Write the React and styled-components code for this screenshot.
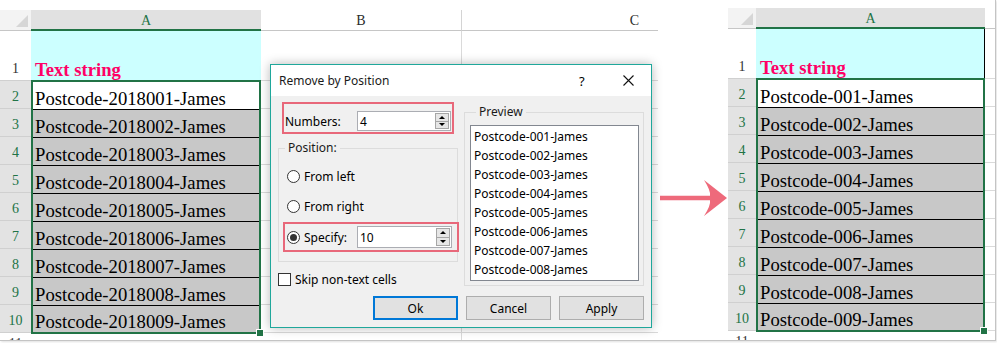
import React from 'react';
import styled, { createGlobalStyle } from 'styled-components';

const GREEN = '#217346';
const HILITE = '#e8687a';
const UI_FONT = "'Noto Sans', 'Open Sans', sans-serif";
const CELL_FONT = "'Liberation Serif', 'Times New Roman', serif";

const GlobalStyle = createGlobalStyle`
  html, body {
    margin: 0;
    padding: 0;
    background: #fff;
  }
  body {
    width: 997px;
    height: 343px;
    overflow: hidden;
  }
`;

const leftValues = Array.from({ length: 9 }, (_, i) => `Postcode-201800${i + 1}-James`);
const rightValues = Array.from({ length: 9 }, (_, i) => `Postcode-00${i + 1}-James`);
const previewItems = Array.from({ length: 8 }, (_, i) => `Postcode-00${i + 1}-James`);

function Sheet({ width, top, rowHeadWidth, colAWidth, extraCols, values, edge }) {
  return (
    <SheetWrap $width={width} $top={top}>
      <Column $w={rowHeadWidth}>
        <Corner>
          <CornerMark />
        </Corner>
        <RowNum $h={50}>1</RowNum>
        {values.map((_, i) => (
          <RowNum key={i} $h={28} $selected>
            {i + 2}
          </RowNum>
        ))}
        <RowTail>11</RowTail>
      </Column>

      <Column $w={colAWidth}>
        <HeadCell $selected>A</HeadCell>
        <TitleCell $edge={edge}>Text string</TitleCell>
        <Selection>
          {values.map((v, i) => (
            <DataCell key={i} $first={i === 0} $last={i === values.length - 1}>
              {v}
            </DataCell>
          ))}
          <FillHandle />
        </Selection>
        <Tail />
      </Column>

      {extraCols.map(col => (
        <Column key={col.label || 'x'} $w={col.width}>
          <HeadCell>{col.label}</HeadCell>
          <GridCell $h={50} />
          {values.map((_, i) => (
            <GridCell key={i} $h={28} />
          ))}
          <Tail $grid />
        </Column>
      ))}
    </SheetWrap>
  );
}

function Spinner({ value, width, height }) {
  return (
    <NumberBox $w={width} $h={height}>
      <span>{value}</span>
      <Spin>
        <SpinBtn>
          <Tri $up />
        </SpinBtn>
        <SpinBtn>
          <Tri />
        </SpinBtn>
      </Spin>
    </NumberBox>
  );
}

function Arrow() {
  return (
    <svg width="70" height="40" viewBox="0 0 70 40">
      <path
        d="M69 20 L46 2 Q53 13 52 17.8 L2 17.8 L2 22.2 L52 22.2 Q53 27 46 38 Z"
        fill="#ee6a7b"
      />
    </svg>
  );
}

export default function App() {
  return (
    <>
      <GlobalStyle />
      <Frame>
        <Sheet
          width={658}
          top={10}
          rowHeadWidth={31}
          colAWidth={230}
          values={leftValues}
          extraCols={[
            { label: 'B', width: 201 },
            { label: 'C', width: 346 },
          ]}
        />
        <ArrowSlot>
          <Arrow />
        </ArrowSlot>
        <Sheet
          width={267}
          top={8}
          rowHeadWidth={28}
          colAWidth={229}
          values={rightValues}
          edge
          extraCols={[{ label: '', width: 40 }]}
        />

        <Dialog>
          <TitleBar>
            <Title>Remove by Position</Title>
            <Help>?</Help>
            <Close>
              <svg width="11" height="11" viewBox="0 0 11 11">
                <path d="M0.5 0.5 L10.5 10.5 M10.5 0.5 L0.5 10.5" stroke="#111" strokeWidth="1.1" />
              </svg>
            </Close>
          </TitleBar>

          <DialogBody>
            <LeftPane>
              <Highlight $w={172} $h={32} $left={4} $padTop={6}>
                <FieldLabel $w={73} $pad={1}>Numbers:</FieldLabel>
                <Spinner value="4" width={94} height={20} />
              </Highlight>

              <Group $w={180}>
                <Legend>Position:</Legend>
                <OptionRow>
                  <Radio />
                  From left
                </OptionRow>
                <OptionRow>
                  <Radio />
                  From right
                </OptionRow>
                <Highlight $w={176} $h={30} $left={4} $top={1}>
                  <FieldLabel $w={72} $pad={2}>
                    <Radio $checked />
                    Specify:
                  </FieldLabel>
                  <Spinner value="10" width={95} height={22} />
                </Highlight>
              </Group>

              <CheckRow>
                <CheckBox />
                Skip non-text cells
              </CheckRow>
            </LeftPane>

            <PreviewGroup>
              <Legend>Preview</Legend>
              <ListBox>
                {previewItems.map(item => (
                  <ListItem key={item}>{item}</ListItem>
                ))}
              </ListBox>
            </PreviewGroup>

            <ButtonRow>
              <DialogButton $primary>Ok</DialogButton>
              <DialogButton>Cancel</DialogButton>
              <DialogButton>Apply</DialogButton>
            </ButtonRow>
          </DialogBody>
        </Dialog>
      </Frame>
    </>
  );
}

/* -------------------- page -------------------- */
const Frame = styled.div`
  position: relative;
  display: flex;
  width: 996px;
  height: 341px;
  box-sizing: border-box;
  border-right: 1px solid #c4c4c4;
  border-bottom: 1px solid #c4c4c4;
  box-shadow: 1px 1px 2px rgba(0, 0, 0, 0.12);
  background: #fff;
  overflow: hidden;
`;

const ArrowSlot = styled.div`
  flex: 0 0 70px;
  padding-top: 178px;
`;

/* -------------------- sheet -------------------- */
const SheetWrap = styled.div`
  display: flex;
  flex: 0 0 ${p => p.$width}px;
  width: ${p => p.$width}px;
  height: 100%;
  box-sizing: border-box;
  padding-top: ${p => p.$top}px;
  overflow: hidden;
`;

const Column = styled.div`
  display: flex;
  flex-direction: column;
  flex: 0 0 ${p => p.$w}px;
  width: ${p => p.$w}px;
`;

const HeadCell = styled.div`
  display: flex;
  align-items: center;
  justify-content: center;
  height: 21px;
  box-sizing: border-box;
  padding-top: 2px;
  border-bottom: ${p => (p.$selected ? `2px solid ${GREEN}` : '1px solid #c6c6c6')};
  border-right: ${p => (p.$selected ? 'none' : '1px solid #d4d4d4')};
  background: ${p => (p.$selected ? '#e1e1e1' : '#fff')};
  color: ${p => (p.$selected ? GREEN : '#2b2b2b')};
  font-family: ${CELL_FONT};
  font-size: 14px;
`;

const Corner = styled.div`
  position: relative;
  height: 21px;
  box-sizing: border-box;
  border-bottom: 1px solid #c6c6c6;
  background: #f3f3f3;
`;

const CornerMark = styled.div`
  position: absolute;
  right: 3px;
  bottom: 3px;
  width: 0;
  height: 0;
  border-left: 12px solid transparent;
  border-bottom: 12px solid #d6d6d6;
`;

const RowNum = styled.div`
  display: flex;
  align-items: flex-end;
  justify-content: center;
  height: ${p => p.$h}px;
  box-sizing: border-box;
  padding-bottom: 4px;
  border-bottom: 1px solid #d0d0d0;
  background: ${p => (p.$selected ? '#e3e3e3' : '#fff')};
  color: ${p => (p.$selected ? GREEN : '#333')};
  font-family: ${CELL_FONT};
  font-size: 14px;
  line-height: 1;
`;

const RowTail = styled.div`
  flex: 1;
  overflow: hidden;
  text-align: center;
  padding-top: 4px;
  color: #333;
  font-family: ${CELL_FONT};
  font-size: 14px;
  line-height: 1;
`;

const TitleCell = styled.div`
  display: flex;
  align-items: flex-end;
  height: 49px;
  box-sizing: border-box;
  padding-left: 4px;
  background: #ccffff;
  border-right: ${p => (p.$edge ? '1px solid #000' : 'none')};
  color: #ff0066;
  font-family: ${CELL_FONT};
  font-size: 18.67px;
  font-weight: bold;
  line-height: 21px;
`;

const Selection = styled.div`
  position: relative;
  border: 2px solid ${GREEN};
`;

const DataCell = styled.div`
  display: flex;
  align-items: flex-end;
  height: ${p => (p.$last ? 26 : 28)}px;
  box-sizing: border-box;
  padding-left: 2px;
  border-bottom: ${p => (p.$last ? 'none' : '1px solid #000')};
  background: ${p => (p.$first ? '#fff' : '#c8c8c8')};
  color: #000;
  font-family: ${CELL_FONT};
  font-size: 18.67px;
  line-height: 21px;
  white-space: nowrap;
`;

const FillHandle = styled.div`
  position: absolute;
  right: -5px;
  bottom: -5px;
  width: 6px;
  height: 6px;
  background: ${GREEN};
  border: 1px solid #fff;
`;

const GridCell = styled.div`
  height: ${p => p.$h}px;
  box-sizing: border-box;
  border-bottom: 1px solid #dadada;
  border-right: 1px solid #dadada;
`;

const Tail = styled.div`
  flex: 1;
  border-right: ${p => (p.$grid ? '1px solid #dadada' : 'none')};
`;

/* -------------------- dialog -------------------- */
const Dialog = styled.div`
  position: absolute;
  left: 270px;
  top: 64px;
  width: 382px;
  height: 264px;
  box-sizing: border-box;
  border: 1px solid #1fa79b;
  background: #f0f0f0;
  box-shadow: 0 0 10px rgba(0, 0, 0, 0.28);
  font-family: ${UI_FONT};
  font-size: 12px;
  color: #000;
`;

const TitleBar = styled.div`
  display: flex;
  align-items: center;
  height: 31px;
  padding: 0 17px 0 8px;
  background: #fff;
`;

const Title = styled.div`
  flex: 1;
  color: #1a1a1a;
`;

const Help = styled.div`
  width: 12px;
  margin-right: 32px;
  font-size: 13px;
`;

const Close = styled.div`
  display: flex;
  align-items: center;
`;

const DialogBody = styled.div`
  display: grid;
  grid-template-columns: 180px 1fr;
  column-gap: 6px;
  padding: 6px 7px 0 7px;
`;

const LeftPane = styled.div`
  display: flex;
  flex-direction: column;
`;

const Highlight = styled.div`
  display: flex;
  align-items: center;
  width: ${p => p.$w}px;
  height: ${p => p.$h}px;
  box-sizing: border-box;
  margin-left: ${p => p.$left}px;
  margin-top: ${p => p.$top || 0}px;
  padding-top: ${p => p.$padTop || 0}px;
  border: 2px solid ${HILITE};
`;

const FieldLabel = styled.div`
  display: flex;
  align-items: center;
  gap: 4px;
  flex: 0 0 ${p => p.$w}px;
  box-sizing: border-box;
  padding-left: ${p => p.$pad}px;
`;

const NumberBox = styled.div`
  display: flex;
  align-items: stretch;
  justify-content: space-between;
  width: ${p => p.$w}px;
  height: ${p => p.$h}px;
  box-sizing: border-box;
  padding-left: 2px;
  border: 1px solid #abadb3;
  background: #fff;

  span {
    align-self: center;
  }
`;

const Spin = styled.div`
  display: flex;
  flex-direction: column;
  width: 14px;
  margin: 1px;
`;

const SpinBtn = styled.div`
  display: flex;
  flex: 1;
  align-items: center;
  justify-content: center;
  border: 1px solid #a6a6a6;
  background: #e6e6e6;

  & + & {
    border-top: none;
  }
`;

const Tri = styled.div`
  width: 0;
  height: 0;
  border-left: 3px solid transparent;
  border-right: 3px solid transparent;
  ${p => (p.$up ? 'border-bottom: 3px solid #000;' : 'border-top: 3px solid #000;')}
`;

const Group = styled.fieldset`
  width: ${p => p.$w}px;
  box-sizing: border-box;
  margin: 6px 0 0 0;
  padding: 5px 0 9px 0;
  border: 1px solid #dcdcdc;
  min-width: 0;
`;

const Legend = styled.legend`
  margin-left: 6px;
  padding: 0 3px;
  line-height: 16px;
  color: #1a1a1a;
`;

const OptionRow = styled.div`
  display: flex;
  align-items: center;
  gap: 4px;
  height: 30px;
  padding-left: 8px;
`;

const Radio = styled.span`
  display: inline-flex;
  align-items: center;
  justify-content: center;
  width: 13px;
  height: 13px;
  box-sizing: border-box;
  border: 1px solid #333;
  border-radius: 50%;
  background: #fff;

  &::after {
    content: '';
    display: ${p => (p.$checked ? 'block' : 'none')};
    width: 7px;
    height: 7px;
    border-radius: 50%;
    background: #333;
  }
`;

const CheckRow = styled.div`
  display: flex;
  align-items: center;
  gap: 4px;
  height: 13px;
  margin-top: 11px;
`;

const CheckBox = styled.span`
  width: 13px;
  height: 13px;
  box-sizing: border-box;
  border: 1px solid #333;
  background: #fff;
`;

const PreviewGroup = styled.fieldset`
  box-sizing: border-box;
  margin: 2px 0 0 0;
  padding: 5px 4px 3px 5px;
  border: 1px solid #dcdcdc;
  min-width: 0;
`;

const ListBox = styled.div`
  height: 156px;
  box-sizing: border-box;
  padding: 1px 0 0 3px;
  border: 1px solid #828790;
  background: #fff;
`;

const ListItem = styled.div`
  line-height: 19px;
  white-space: nowrap;
`;

const ButtonRow = styled.div`
  grid-column: 1 / -1;
  display: flex;
  justify-content: flex-end;
  gap: 8px;
  margin-top: 10px;
`;

const DialogButton = styled.div`
  display: flex;
  align-items: center;
  justify-content: center;
  width: 85px;
  height: 24px;
  box-sizing: border-box;
  border: ${p => (p.$primary ? '2px solid #0078d7' : '1px solid #adadad')};
  background: #e1e1e1;
`;
